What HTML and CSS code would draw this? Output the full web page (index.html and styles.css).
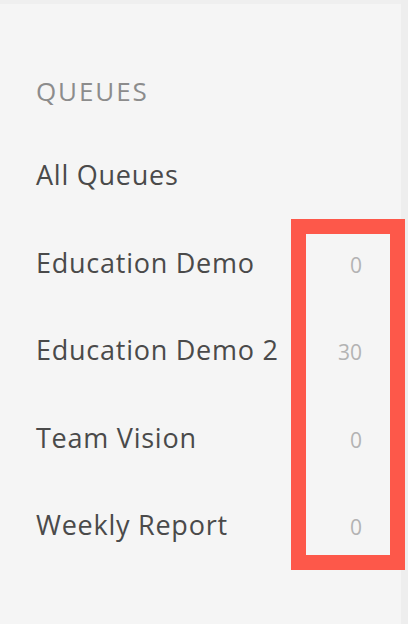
FILE: index.html
```html
<!DOCTYPE html>
<html>
<head>
<title>Queues</title>
<link rel="stylesheet" href="styles.css">
</head>
<body>
<div id="sidebar">
<h2 class="heading">QUEUES</h2>
<ul class="queues">
<li><span class="qname">All Queues</span></li>
<li><span class="qname">Education Demo</span><span class="qcount">0</span></li>
<li><span class="qname">Education Demo 2</span><span class="qcount">30</span></li>
<li><span class="qname">Team Vision</span><span class="qcount">0</span></li>
<li><span class="qname">Weekly Report</span><span class="qcount">0</span></li>
</ul>
<div class="highlight"></div>
</div>
</body>
</html>
```

FILE: styles.css
```css
html, body{
margin:0;
padding:0;
height:100%;
}

body{
background-color:#eeeeee;
font-family:"Open Sans", "Liberation Sans", sans-serif;
}

#sidebar{
position:relative;
padding:72px 39px 0 36px;
border-top:4px solid #efefef;
box-sizing:border-box;
width:401px;
height:624px;
background-color:#f5f5f5;
}

.heading{
margin:0 0 25px 0;
font-size:26px;
line-height:30px;
font-weight:normal;
letter-spacing:1.9px;
color:#8c8c8c;
}

ul.queues{
list-style-type:none;
margin:0;
padding:0;
}

ul.queues li{
display:flex;
justify-content:space-between;
align-items:baseline;
height:87.5px;
line-height:87.5px;
}

.qname{
font-size:27px;
letter-spacing:0.75px;
color:#4a4a4a;
}

.qcount{
font-size:21px;
color:#b3b3b3;
}

.highlight{
position:absolute;
left:291px;
top:215px;
width:114px;
height:351px;
border:15px solid #fd584a;
box-sizing:border-box;
}
```
